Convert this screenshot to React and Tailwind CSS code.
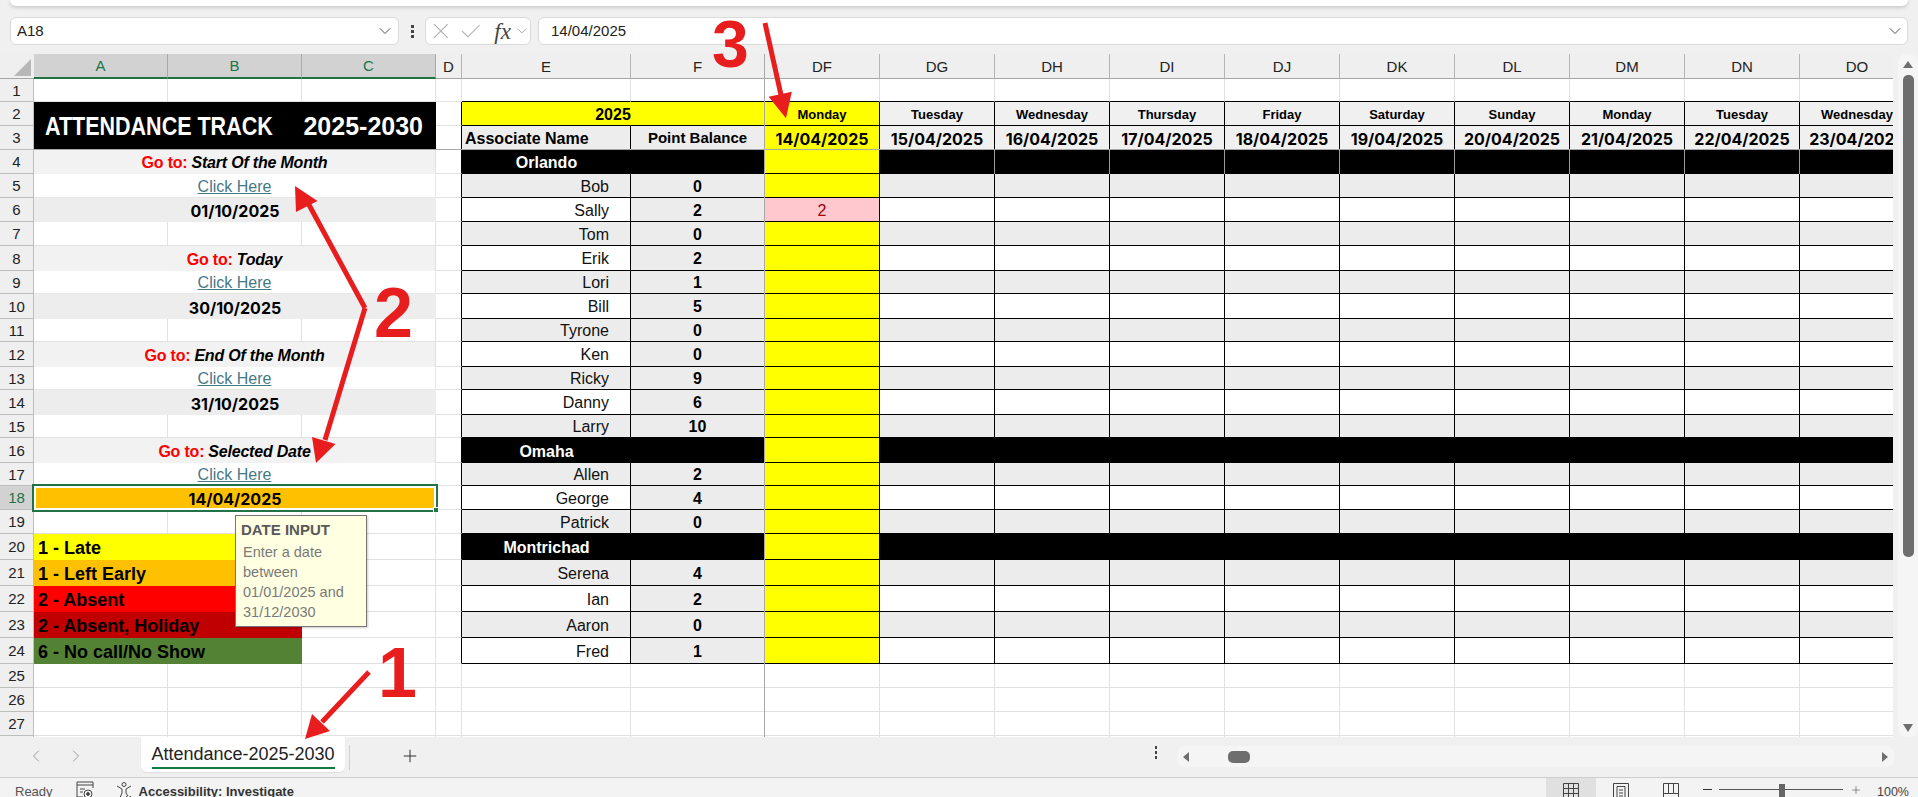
import { ChevronDown, ChevronLeft, ChevronRight, Plus } from "lucide-react";

const sans = "font-['Liberation_Sans',Arial,sans-serif]";
const inter = "font-['Inter',sans-serif]";

const grid = "border-r border-b border-[#e1e1e1] bg-white";
const line = "border-r border-b border-black";
const center = "flex items-center justify-center pt-[2px]";

const days = ["Tuesday", "Wednesday", "Thursday", "Friday", "Saturday", "Sunday", "Monday", "Tuesday", "Wednesday"];
const dates = ["15/04/2025", "16/04/2025", "17/04/2025", "18/04/2025", "19/04/2025", "20/04/2025", "21/04/2025", "22/04/2025", "23/04/2025"];
const colNames = ["DG", "DH", "DI", "DJ", "DK", "DL", "DM", "DN", "DO"];

// rows 4 to 24 of the table, E to the last column
const table = [
  { site: "Orlando", ticks: true },
  { name: "Bob", pts: 0 },
  { name: "Sally", pts: 2, hit: 2 },
  { name: "Tom", pts: 0 },
  { name: "Erik", pts: 2 },
  { name: "Lori", pts: 1 },
  { name: "Bill", pts: 5 },
  { name: "Tyrone", pts: 0 },
  { name: "Ken", pts: 0 },
  { name: "Ricky", pts: 9 },
  { name: "Danny", pts: 6 },
  { name: "Larry", pts: 10 },
  { site: "Omaha" },
  { name: "Allen", pts: 2 },
  { name: "George", pts: 4 },
  { name: "Patrick", pts: 0 },
  { site: "Montrichad" },
  { name: "Serena", pts: 4 },
  { name: "Ian", pts: 2 },
  { name: "Aaron", pts: 0 },
  { name: "Fred", pts: 1 },
];

const rowHead = (n, active) => (
  <div
    className={`${center} border-r border-b border-[#bdbdbd] text-[15px] ${
      active ? "bg-[#d2d2d2] text-[#217346]" : "bg-[#efefef] text-[#222]"
    }`}
  >
    {n}
  </div>
);

const GoTo = ({ label }) => (
  <div className={`col-span-3 ${center} bg-[#f2f2f2] border-r border-[#e1e1e1] text-[16px] font-bold italic tracking-[-0.2px]`}>
    <span className="text-[#ff0000] not-italic mr-1">Go to:</span>
    <span className="text-black">{label}</span>
  </div>
);

const ClickHere = () => (
  <div className={`col-span-3 ${center} bg-white border-r border-b border-[#e8e8e8] text-[16px] text-[#467886] underline`}>
    Click Here
  </div>
);

const DateCell = ({ value }) => (
  <div className={`col-span-3 ${center} bg-[#ededed] ${inter} text-[16px] font-bold text-black`}>{value}</div>
);

const Blank3 = () => (
  <>
    <div className={grid} />
    <div className={grid} />
    <div className={grid} />
  </>
);

const Legend = ({ text, color }) => (
  <>
    <div className={`col-span-2 flex items-center pl-1 pt-[2px] ${color} text-[18px] font-bold text-black whitespace-nowrap`}>{text}</div>
    <div className={grid} />
  </>
);

function left(n) {
  if (n === 1 || n === 7 || n === 11 || n === 15 || n === 19 || n > 24) return <Blank3 />;
  if (n === 2)
    return (
      <div className="col-span-3 row-span-2 flex items-center pl-[11px] pr-[13px] pt-[2px] bg-black text-[25px] font-bold text-white">
        <div className="w-[230px] whitespace-nowrap origin-left scale-x-[0.86]">ATTENDANCE TRACK</div>
        <div className="ml-auto whitespace-nowrap">2025-2030</div>
      </div>
    );
  if (n === 4) return <GoTo label="Start Of the Month" />;
  if (n === 8) return <GoTo label="Today" />;
  if (n === 12) return <GoTo label="End Of the Month" />;
  if (n === 16) return <GoTo label="Selected Date" />;
  if (n === 5 || n === 9 || n === 13 || n === 17) return <ClickHere />;
  if (n === 6) return <DateCell value="01/10/2025" />;
  if (n === 10) return <DateCell value="30/10/2025" />;
  if (n === 14) return <DateCell value="31/10/2025" />;
  if (n === 18)
    return (
      <div className={`col-span-3 ${center} relative bg-[#ffc000] ${inter} text-[16px] font-bold text-black border-2 border-white outline-2 outline-[#217346]`}>
        14/04/2025
        <span className="absolute -right-[5px] -bottom-[5px] w-[6px] h-[6px] bg-[#217346] border border-white" />
      </div>
    );
  if (n === 20) return <Legend text="1 - Late" color="bg-[#ffff00]" />;
  if (n === 21) return <Legend text="1 - Left Early" color="bg-[#ffc000]" />;
  if (n === 22) return <Legend text="2 - Absent" color="bg-[#ff0000]" />;
  if (n === 23) return <Legend text="2 - Absent, Holiday" color="bg-[#c00000]" />;
  if (n === 24) return <Legend text="6 - No call/No Show" color="bg-[#548235]" />;
  return null;
}

function right(n) {
  if (n === 1) {
    return Array.from({ length: 12 }, (_, i) => <div key={i} className="border-r border-b border-r-[#e1e1e1] border-b-black bg-white" />);
  }
  if (n === 2) {
    return (
      <>
        <div className={`col-span-2 ${center} ${line} bg-[#ffff00] text-[16px] font-bold`}>2025</div>
        <div className={`${center} ${line} bg-[#ffff00] text-[13px] font-bold`}>Monday</div>
        {days.map((d, i) => (
          <div key={i} className={`${center} ${line} bg-[#f0f0f0] text-[13px] font-bold whitespace-nowrap`}>{d}</div>
        ))}
      </>
    );
  }
  if (n === 3) {
    return (
      <>
        <div className={`flex items-center pl-[3px] pt-[2px] ${line} bg-[#ededed] text-[16px] font-bold`}>Associate Name</div>
        <div className={`${center} ${line} bg-[#ededed] text-[15px] font-bold`}>Point Balance</div>
        <div className={`${center} ${line} bg-[#ffff00] ${inter} text-[16px] font-bold`}>14/04/2025</div>
        {dates.map((d, i) => (
          <div key={i} className={`${center} ${line} bg-[#f0f0f0] ${inter} text-[16px] font-bold whitespace-nowrap`}>{d}</div>
        ))}
      </>
    );
  }
  if (n <= 24) {
    const r = table[n - 4];
    const cells = Array.from({ length: 9 }, (_, i) => i);
    if (r.site) {
      return (
        <>
          <div className={`${center} bg-black text-[16px] font-bold text-white`}>{r.site}</div>
          <div className="bg-black border-r border-black" />
          <div className={`${line} bg-[#ffff00]`} />
          {cells.map((i) => (
            <div key={i} className={`bg-black border-r ${r.ticks ? "border-[#9a9a9a]" : "border-black"}`} />
          ))}
        </>
      );
    }
    const stripe = (n - (n > 20 ? 21 : n > 16 ? 17 : 5)) % 2 === 0 ? "bg-[#ececec]" : "bg-white";
    return (
      <>
        <div className={`flex items-center justify-end pr-[21px] pt-[2px] ${line} ${stripe} text-[16px] text-[#111]`}>{r.name}</div>
        <div className={`${center} ${line} bg-[#ececec] text-[16px] font-bold`}>{r.pts}</div>
        <div className={`${center} ${line} text-[16px] ${r.hit ? "bg-[#ffc7ce] text-[#9c0006]" : "bg-[#ffff00]"}`}>{r.hit}</div>
        {cells.map((i) => (
          <div key={i} className={`${line} ${stripe}`} />
        ))}
      </>
    );
  }
  return Array.from({ length: 12 }, (_, i) => <div key={i} className={grid} />);
}

function Sheet() {
  const rows = Array.from({ length: 28 }, (_, i) => i + 1);
  return (
    <div className="relative w-[1893px] overflow-hidden">
      <div className="grid grid-cols-[34px_134px_134px_134px_26px_169px_134px_repeat(10,115px)] grid-rows-[25px_23px_24px_24px_24px_24px_24px_24px_25px_23px_25px_23px_25px_23px_25px_23px_25px_23px_24px_24px_26px_26px_26px_26px_26px_24px_24px_24px_24px] w-[1915px]">
        <div className="flex items-end justify-end pr-[3px] pb-[2px] bg-[#efefef] border-b border-[#a6a6a6]">
          <svg width="17" height="17" viewBox="0 0 17 17">
            <path d="M17 0V17H0Z" fill="#b7b7b7" />
          </svg>
        </div>
        {["A", "B", "C"].map((c) => (
          <div key={c} className={`${center} bg-[#d2d2d2] border-r border-[#a9a9a9] border-b-2 border-b-[#217346] text-[15px] text-[#217346]`}>{c}</div>
        ))}
        {["D", "E", "F", "DF", ...colNames].map((c) => (
          <div key={c} className={`${center} bg-[#efefef] border-r border-b border-r-[#b5b5b5] border-b-[#a6a6a6] text-[15px] text-[#222]`}>{c}</div>
        ))}

        {rows.map((n) => (
          <div key={n} className="contents">
            {rowHead(n, n === 18)}
            {left(n)}
            {n >= 2 && n <= 24 ? <div className={`${line} border-r-black border-b-[#e1e1e1] bg-white`} /> : <div className={grid} />}
            {right(n)}
          </div>
        ))}
      </div>

      {/* freeze pane lines */}
      <div className="absolute left-[764px] top-0 bottom-0 w-px bg-[#a8a8a8]" />
      <div className="absolute left-[34px] right-0 top-[95px] h-px bg-[#a8a8a8]" />

      {/* data validation tip */}
      <div className="absolute left-[235px] top-[461px] w-[132px] h-[112px] bg-[#ffffe1] border border-[#767676] shadow-[1px_1px_2px_rgba(0,0,0,0.2)] pl-[5px] pt-[4px] text-[14.5px] leading-[20px] text-[#7a7a7a]">
        <div className="text-[15px] font-bold text-[#595959] mb-[2px]">DATE INPUT</div>
        <div className="pl-[2px]">Enter a date</div>
        <div className="pl-[2px]">between</div>
        <div className="pl-[2px] whitespace-nowrap">01/01/2025 and</div>
        <div className="pl-[2px]">31/12/2030</div>
      </div>
    </div>
  );
}

function VScroll() {
  return (
    <div className="flex-1 flex justify-end">
      <div className="w-[20px] bg-[#f5f5f5] rounded-[8px] flex flex-col items-center relative">
        <div className="mt-[7px] w-0 h-0 border-x-[5px] border-x-transparent border-b-[7px] border-b-[#6e6e6e]" />
        <div className="mt-[7px] w-[11px] h-[482px] bg-[#6e6e6e] rounded-[5px]" />
        <div className="mt-auto mb-[5px] w-0 h-0 border-x-[5px] border-x-transparent border-t-[8px] border-t-[#6e6e6e]" />
      </div>
    </div>
  );
}

function TopBar() {
  return (
    <div className="h-[54px] flex flex-col">
      <div className="mx-[10px] h-[6px] bg-white rounded-b-[8px] shadow-[0_1px_4px_rgba(0,0,0,0.22)]" />
      <div className="mt-[11px] px-[10px] h-[28px] flex items-stretch">
        <div className="w-[389px] bg-white border border-[#dadada] rounded-[6px] flex items-center justify-between pl-[6px] pr-[3px] text-[15px] text-[#222]">
          A18
          <ChevronDown size={20} strokeWidth={1.1} className="text-[#444]" />
        </div>
        <div className="w-[26px] flex flex-col items-center justify-center gap-[2px]">
          <span className="w-[3px] h-[3px] bg-[#444]" />
          <span className="w-[3px] h-[3px] bg-[#444]" />
          <span className="w-[3px] h-[3px] bg-[#444]" />
        </div>
        <div className="w-[106px] bg-white border border-[#dadada] rounded-[6px] flex items-center pl-[7px]">
          <svg width="16" height="16" viewBox="0 0 16 16" stroke="#b0b0b0" strokeWidth="1.2" fill="none">
            <path d="M1 1L15 15M15 1L1 15" />
          </svg>
          <svg width="20" height="14" viewBox="0 0 20 14" stroke="#b8b8b8" strokeWidth="1.2" fill="none" className="ml-[12px]">
            <path d="M1 7L7 13L19 1" />
          </svg>
          <span className="ml-[14px] w-[15px] font-['Liberation_Serif',serif] italic text-[23px] leading-none text-[#444]">fx</span>
          <ChevronDown size={16} strokeWidth={1.1} className="ml-[5px] text-[#909090]" />
        </div>
        <div className="ml-[7px] flex-1 bg-white border border-[#dadada] rounded-[6px] flex items-center justify-between pl-[12px] pr-[2px] text-[15px] text-[#222]">
          14/04/2025
          <ChevronDown size={20} strokeWidth={1.1} className="text-[#444]" />
        </div>
      </div>
    </div>
  );
}

function TabBar() {
  return (
    <div className="h-[40px] flex items-start">
      <div className="w-[141px] h-[38px] flex items-center pl-[26px] gap-[20px] text-[#9a9a9a]">
        <ChevronLeft size={20} strokeWidth={1.2} />
        <ChevronRight size={20} strokeWidth={1.2} />
      </div>
      <div className="w-[204px] h-[35px] bg-white rounded-b-[6px] flex flex-col items-center pt-[5px] text-[18px] text-[#222] shadow-[0_1px_1px_rgba(0,0,0,0.08)]">
        <span className="leading-[24px] whitespace-nowrap">Attendance-2025-2030</span>
        <span className="w-[183px] h-[2px] bg-[#107c41] mt-[1px]" />
      </div>
      <div className="ml-[4px] mt-[8px] w-px h-[25px] bg-[#d0d0d0]" />
      <Plus size={20} strokeWidth={1.2} className="ml-[50px] mt-[9px] text-[#333]" />
      <div className="ml-auto mt-[9px] mr-[13px] w-[16px] flex flex-col items-center gap-[2px]">
        <span className="w-[2px] h-[3px] bg-[#444]" />
        <span className="w-[2px] h-[3px] bg-[#444]" />
        <span className="w-[2px] h-[3px] bg-[#444]" />
      </div>
      <div className="mt-[9px] mr-[24px] w-[717px] h-[21px] bg-[#f5f5f5] rounded-[8px] flex items-center pl-[6px] pr-[6px]">
        <div className="w-0 h-0 border-y-[5px] border-y-transparent border-r-[6px] border-r-[#6e6e6e]" />
        <div className="ml-[39px] w-[22px] h-[12px] bg-[#6e6e6e] rounded-[5px]" />
        <div className="ml-auto w-0 h-0 border-y-[5px] border-y-transparent border-l-[6px] border-l-[#6e6e6e]" />
      </div>
    </div>
  );
}

function StatusBar() {
  return (
    <div className="h-[20px] bg-[#f3f3f3] border-t border-[#cdcdcd] flex items-start overflow-hidden text-[13px] text-[#555]">
      <span className="ml-[15px] mt-[5px] leading-[18px]">Ready</span>
      <svg width="20" height="20" viewBox="0 0 20 20" className="ml-[22px] mt-[3px]" fill="none" stroke="#444" strokeWidth="1">
        <path d="M2 1h16v6M2 1v15h6M2 4h16" />
        <path d="M5 8h5M5 11h3" />
        <circle cx="13" cy="13" r="4" />
        <circle cx="13" cy="13" r="1.4" fill="#444" />
      </svg>
      <svg width="20" height="20" viewBox="0 0 20 20" className="ml-[20px] mt-[3px]" fill="none" stroke="#444" strokeWidth="1">
        <circle cx="9" cy="3.5" r="2" />
        <path d="M2 5l5 3v4l-3 7M16 5l-5 3v4l2 3M11 15l5 4M16 15l-5 4" />
      </svg>
      <span className="ml-[4px] mt-[5px] leading-[18px] font-bold text-[#333]">Accessibility: Investigate</span>

      <div className="ml-auto w-[50px] h-full bg-[#e0e0e0] flex justify-center pt-[5px]">
        <svg width="16" height="20" viewBox="0 0 16 20" fill="none" stroke="#444" strokeWidth="1">
          <path d="M.5.5h15v20h-15zM5.5.5v20M10.5.5v20M.5 5.5h15M.5 10.5h15" />
        </svg>
      </div>
      <div className="w-[50px] flex justify-center pt-[5px]">
        <svg width="16" height="20" viewBox="0 0 16 20" fill="none" stroke="#444" strokeWidth="1">
          <path d="M.5.5h15v20h-15zM4 3.5h8v14H4zM6 7h4M6 10h4M6 13h4" />
        </svg>
      </div>
      <div className="w-[50px] flex justify-center pt-[5px]">
        <svg width="16" height="20" viewBox="0 0 16 20" fill="none" stroke="#444" strokeWidth="1">
          <path d="M.5 20V.5h15V20M5.5.5v10h5V.5M.5 10.5h5M10.5 10.5h5" />
        </svg>
      </div>
      <div className="relative w-[181px] h-full">
        <span className="absolute left-[7px] top-[11px] w-[9px] h-px bg-[#333]" />
        <span className="absolute left-[23px] top-[11px] w-[124px] h-px bg-[#555]" />
        <span className="absolute left-[83px] top-[6px] w-[6px] h-[14px] bg-[#666]" />
        <Plus size={12} strokeWidth={1} className="absolute left-[154px] top-[6px] text-[#333]" />
      </div>
      <span className="mt-[5px] mr-[9px] leading-[18px] text-[12.5px] text-[#444]">100%</span>
    </div>
  );
}

// red marks drawn over the screenshot
function Annotations() {
  return (
    <>
      <svg width="1918" height="797" className="absolute inset-0 pointer-events-none" fill="#e81e1e" stroke="none">
        <path d="M365 308L308 203M365 308L325 440M765 23L781 95M369 672L322 722" stroke="#e81e1e" strokeWidth="5" fill="none" />
        <path d="M295 186L317.5 201L296 212Z" />
        <path d="M312 437L335.5 444L316 463Z" />
        <path d="M768.6 96.7L791.8 91.7L786 118.3Z" />
        <path d="M312 714L330 731L305 739Z" />
      </svg>
      <span className="absolute left-[712px] top-[5px] text-[66px] leading-[78px] font-bold text-[#e81e1e] pointer-events-none">3</span>
      <span className="absolute left-[374px] top-[273px] text-[70px] leading-[80px] font-bold text-[#e81e1e] pointer-events-none">2</span>
      <span className="absolute left-[378px] top-[633px] text-[70px] leading-[80px] font-bold text-[#e81e1e] pointer-events-none">1</span>
    </>
  );
}

export default function App() {
  return (
    <div className={`relative w-[1918px] h-[797px] overflow-hidden bg-[#f0f0f0] ${sans} text-black`}>
      <TopBar />
      <div className="h-[683px] flex">
        <Sheet />
        <VScroll />
      </div>
      <TabBar />
      <StatusBar />
      <Annotations />
    </div>
  );
}
